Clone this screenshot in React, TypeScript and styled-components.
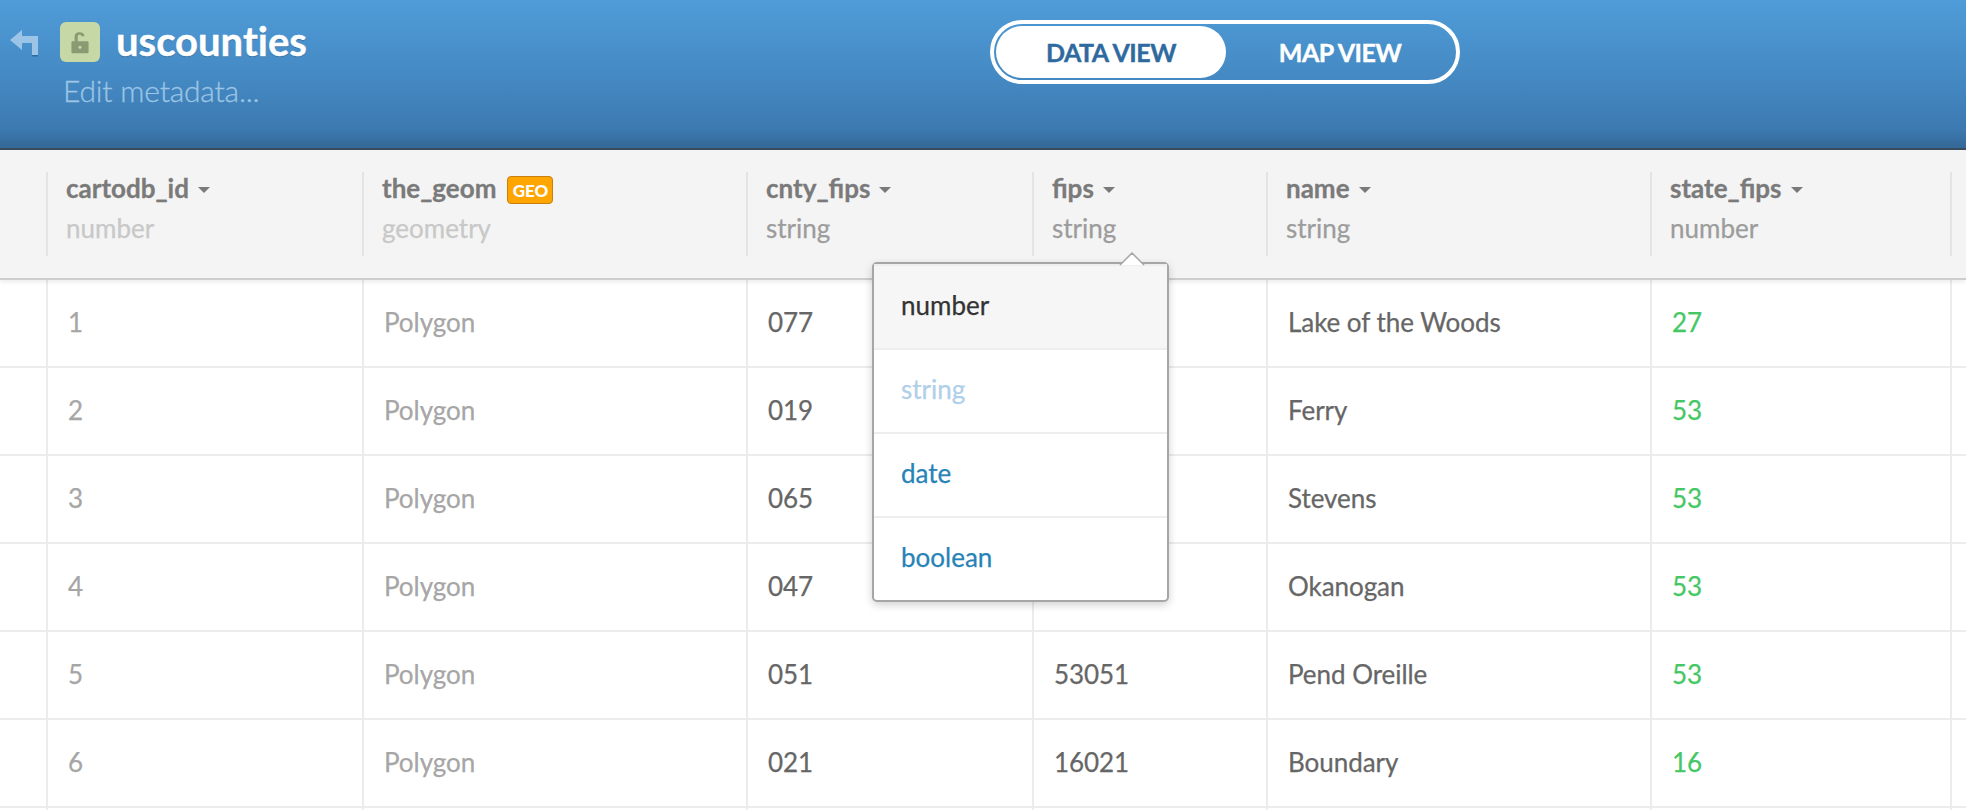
import React from 'react'
import styled, { createGlobalStyle } from 'styled-components'

const Global = createGlobalStyle`
  html, body {
    margin: 0;
    padding: 0;
    background: #fff;
    overflow: hidden;
  }
  body {
    font-family: Lato, "Open Sans", "Liberation Sans", sans-serif;
  }
`

const columnGrid = '46px 316px 384px 286px 234px 384px 300px 16px'

const Page = styled.div`
  position: relative;
  width: 1966px;
  height: 810px;
  overflow: hidden;
`

const Header = styled.header`
  height: 150px;
  box-sizing: border-box;
  display: flex;
  background: linear-gradient(to bottom, #4f9cd8 0%, #4488c2 55%, #3c79b0 88%, #346897 100%);
  border-bottom: 2px solid #3a4d60;
`

const TitleBlock = styled.div`
  width: 990px;
  flex: none;
  position: relative;
`

const TitleRow = styled.div`
  display: flex;
  align-items: flex-start;
`

const BackArrow = styled.svg`
  width: 30px;
  height: 28px;
  margin: 29px 0 0 9px;
  flex: none;
`

const LockBox = styled.div`
  width: 40px;
  height: 40px;
  margin: 22px 0 0 21px;
  border-radius: 6px;
  background: #c6d8a5;
  display: flex;
  align-items: center;
  justify-content: center;
  flex: none;
`

const Title = styled.h1`
  margin: 17px 0 0 16px;
  font-size: 40px;
  line-height: 48px;
  font-weight: 700;
  font-variant-ligatures: none;
  color: #fff;
  -webkit-text-stroke: 0.4px #fff;
  text-shadow: 0 1px 1px rgba(0, 0, 0, 0.25);
`

const EditLink = styled.a`
  display: block;
  margin: 7px 0 0 63px;
  font-size: 30px;
  line-height: 36px;
  font-weight: 300;
  font-variant-ligatures: none;
  letter-spacing: -0.2px;
  color: #9cc5e6;
  -webkit-text-stroke: 0.3px #9cc5e6;
`

const Toggle = styled.div`
  margin-top: 20px;
  width: 470px;
  height: 64px;
  box-sizing: border-box;
  border: 4px solid #fff;
  border-radius: 32px;
  padding: 2px;
  display: flex;
`

const ToggleItem = styled.div<{ $active?: boolean }>`
  width: ${p => (p.$active ? '230px' : '228px')};
  border-radius: 26px;
  background: ${p => (p.$active ? '#fff' : 'transparent')};
  color: ${p => (p.$active ? '#2f6a9f' : '#fff')};
  -webkit-text-stroke: 0.4px ${p => (p.$active ? '#2f6a9f' : '#fff')};
  font-size: 25px;
  font-weight: 700;
  display: flex;
  align-items: center;
  justify-content: center;
  letter-spacing: -0.5px;
`

const HeadRow = styled.div`
  display: grid;
  grid-template-columns: ${columnGrid};
  height: 130px;
  box-sizing: border-box;
  padding-top: 22px;
  background: #f4f4f4;
  border-bottom: 2px solid #cdcdcd;
  box-shadow: 0 2px 5px rgba(0, 0, 0, 0.08);
  position: relative;
`

const HeadCell = styled.div`
  height: 84px;
  box-sizing: border-box;
  border-left: 2px solid #e4e4e4;
  padding-left: 18px;

  &:first-child {
    border-left: 0;
    padding: 0;
  }
`

const ColName = styled.div`
  display: flex;
  align-items: center;
  height: 32px;
  font-size: 26px;
  font-weight: 700;
  color: #7a7a7a;
  -webkit-text-stroke: 0.3px #7a7a7a;
`

const Caret = styled.span`
  width: 0;
  height: 0;
  margin-left: 9px;
  margin-top: 4px;
  border-left: 6px solid transparent;
  border-right: 6px solid transparent;
  border-top: 6px solid #7a7a7a;
`

const GeoBadge = styled.span`
  margin-left: 11px;
  margin-top: 4px;
  height: 28px;
  width: 46px;
  box-sizing: border-box;
  border: 1px solid #c97f10;
  border-radius: 4px;
  background: #ffa500;
  color: #fff;
  -webkit-text-stroke: 0;
  font-size: 17px;
  font-weight: 900;
  display: flex;
  align-items: center;
  justify-content: center;
`

const ColType = styled.div<{ $muted?: boolean }>`
  margin-top: 9px;
  font-size: 26px;
  line-height: 30px;
  color: ${p => (p.$muted ? '#c8c8c8' : '#9c9c9c')};
  -webkit-text-stroke: 0.25px ${p => (p.$muted ? '#c8c8c8' : '#9c9c9c')};
`

const Row = styled.div`
  display: grid;
  grid-template-columns: ${columnGrid};
  height: 88px;
  box-sizing: border-box;
  border-bottom: 2px solid #ececec;

  &:first-of-type {
    height: 87px;
  }
`

const Cell = styled.div<{ $tone?: 'muted' | 'text' | 'number' }>`
  border-left: 2px solid #ececec;
  padding: 0 0 2px 20px;
  display: flex;
  align-items: center;
  font-size: 26px;
  letter-spacing: -0.05px;
  color: ${p => (p.$tone === 'muted' ? '#a6a6a6' : p.$tone === 'number' ? '#45c765' : '#666')};
  -webkit-text-stroke: 0.25px ${p => (p.$tone === 'muted' ? '#a6a6a6' : p.$tone === 'number' ? '#45c765' : '#666')};

  &:first-child {
    border-left: 0;
    padding: 0;
  }
`

const Popup = styled.div`
  position: absolute;
  left: 872px;
  top: 262px;
  width: 297px;
  height: 340px;
  box-sizing: border-box;
  border: 2px solid #a6a6a6;
  border-radius: 5px;
  background: #fff;
  box-shadow: 0 3px 8px rgba(0, 0, 0, 0.18);
  display: flex;
  flex-direction: column;
`

const PopupArrow = styled.svg`
  position: absolute;
  left: 245px;
  top: -12px;
  width: 26px;
  height: 14px;
`

const PopupItem = styled.div<{ $state?: 'current' | 'disabled' }>`
  flex: 1;
  display: flex;
  align-items: center;
  padding: 0 0 5px 27px;
  font-size: 26px;
  border-top: 2px solid #eee;
  color: ${p => (p.$state === 'current' ? '#333' : p.$state === 'disabled' ? '#b0cfe8' : '#2783b7')};
  -webkit-text-stroke: 0.25px ${p => (p.$state === 'current' ? '#333' : p.$state === 'disabled' ? '#b0cfe8' : '#2783b7')};
  background: ${p => (p.$state === 'current' ? '#f6f6f6' : 'transparent')};

  &:first-child {
    border-top: 0;
    border-radius: 3px 3px 0 0;
  }
`

const columns = [
  { name: 'cartodb_id', type: 'number', muted: true },
  { name: 'the_geom', type: 'geometry', muted: true, geo: true },
  { name: 'cnty_fips', type: 'string' },
  { name: 'fips', type: 'string' },
  { name: 'name', type: 'string' },
  { name: 'state_fips', type: 'number' }
]

const rows = [
  ['1', 'Polygon', '077', '27077', 'Lake of the Woods', '27'],
  ['2', 'Polygon', '019', '53019', 'Ferry', '53'],
  ['3', 'Polygon', '065', '53065', 'Stevens', '53'],
  ['4', 'Polygon', '047', '53047', 'Okanogan', '53'],
  ['5', 'Polygon', '051', '53051', 'Pend Oreille', '53'],
  ['6', 'Polygon', '021', '16021', 'Boundary', '16']
]

const App = () => {
  return (
    <Page>
      <Global />
      <Header>
        <TitleBlock>
          <TitleRow>
            <BackArrow viewBox="0 0 30 28">
              <path d="M1 11 L13 1 L13 7 L29 7 L29 26 L23 26 L23 14 L13 14 L13 21 Z" fill="#9cc4e6" />
              <path d="M23 26 H29 V27.5 H23 Z" fill="#2f6a9f" />
            </BackArrow>
            <LockBox>
              <svg width="18" height="23" viewBox="0 0 20 25">
                <path d="M4 11 V6 C4 2.5 6.5 1 9.5 1 C12.5 1 15 2.5 15 5.5 H11.5 C11.5 4.5 10.8 4 9.5 4 C8.2 4 7.5 4.7 7.5 6 V11 H18 C19 11 19.5 11.5 19.5 12.5 V23 C19.5 24 19 24.5 18 24.5 H2 C1 24.5 .5 24 .5 23 V12.5 C.5 11.5 1 11 2 11 Z M10 16 a1.8 1.8 0 1 0 .01 0 Z" fill="#8a9a72" fillRule="evenodd" />
              </svg>
            </LockBox>
            <Title>uscounties</Title>
          </TitleRow>
          <EditLink>Edit metadata...</EditLink>
        </TitleBlock>
        <Toggle>
          <ToggleItem $active>DATA VIEW</ToggleItem>
          <ToggleItem>MAP VIEW</ToggleItem>
        </Toggle>
      </Header>

      <HeadRow>
        <HeadCell />
        {columns.map(col => (
          <HeadCell key={col.name}>
            <ColName>
              {col.name}
              {col.geo ? <GeoBadge>GEO</GeoBadge> : <Caret />}
            </ColName>
            <ColType $muted={col.muted}>{col.type}</ColType>
          </HeadCell>
        ))}
        <HeadCell />
      </HeadRow>

      {rows.map(row => (
        <Row key={row[0]}>
          <Cell />
          <Cell $tone="muted">{row[0]}</Cell>
          <Cell $tone="muted">{row[1]}</Cell>
          <Cell>{row[2]}</Cell>
          <Cell>{row[3]}</Cell>
          <Cell>{row[4]}</Cell>
          <Cell $tone="number">{row[5]}</Cell>
          <Cell />
        </Row>
      ))}
      <Row>
        <Cell />
        <Cell />
        <Cell />
        <Cell />
        <Cell />
        <Cell />
        <Cell />
        <Cell />
      </Row>

      <Popup>
        <PopupArrow viewBox="0 0 26 14">
          <path d="M1 13 L13 1 L25 13 Z" fill="#fff" />
          <path d="M1 13 L13 1 L25 13" fill="none" stroke="#a6a6a6" strokeWidth="1.5" />
        </PopupArrow>
        <PopupItem $state="current">number</PopupItem>
        <PopupItem $state="disabled">string</PopupItem>
        <PopupItem>date</PopupItem>
        <PopupItem>boolean</PopupItem>
      </Popup>
    </Page>
  )
}

export default App
